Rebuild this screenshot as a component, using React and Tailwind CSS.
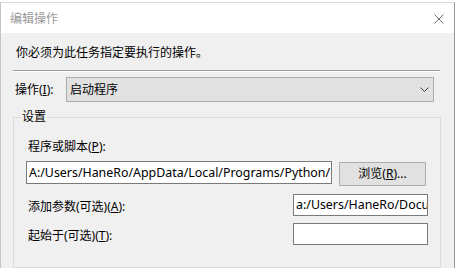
import React from 'react'

const Field = ({ text, className = '' }) => (
    <div className={`h-[22px] bg-white border border-[#7a7a7a] overflow-hidden whitespace-nowrap text-[12.4px] leading-[20px] pl-[2px] ${className}`}>
        {text}
    </div>
)

const App = () => {
    return (
        <div className="w-[456px] h-[268px] bg-white overflow-hidden text-[12px] text-black font-['Noto_Sans','Noto_Sans_CJK_SC',sans-serif]">
            <div className="mt-[2px] w-[455px] h-[266px] border-t border-l border-r border-t-[#dadada] border-l-[#c4c4c4] border-r-[#9a9a9a] flex flex-col">
                {/* title bar */}
                <div className="h-[30px] bg-white flex items-center justify-between pl-[9px] pr-[9px] pt-[1px]">
                    <span className="text-[#9a9a9a] leading-[16px]">编辑操作</span>
                    <svg width="10" height="10" viewBox="0 0 10 10" className="mr-[1px]">
                        <path d="M0.5 0.5 L9.5 9.5 M9.5 0.5 L0.5 9.5" stroke="#707070" strokeWidth="1" fill="none" />
                    </svg>
                </div>

                <div className="flex-1 bg-[#f0f0f0] flex flex-col">
                    <p className="pt-[12px] pl-[15px] leading-[16px]">你必须为此任务指定要执行的操作。</p>

                    <div className="mt-[9px] ml-[12px] w-[427px]">
                        <div className="h-px bg-[#a0a0a0]" />
                        <div className="h-px bg-white" />
                    </div>

                    <div className="mt-[5px] ml-[14px] flex items-center">
                        <span className="w-[51px] leading-[16px]">操作(<u>I</u>):</span>
                        <div className="w-[368px] h-[25px] bg-[#e1e1e1] border border-[#adadad] flex items-center justify-between pl-[3px] pr-[4px]">
                            <span className="leading-[16px]">启动程序</span>
                            <svg width="9" height="5" viewBox="0 0 9 5">
                                <path d="M0.5 0.5 L4.5 4.5 L8.5 0.5" stroke="#404040" strokeWidth="1" fill="none" />
                            </svg>
                        </div>
                    </div>

                    <fieldset className="mt-[7px] ml-[12px] w-[428px] flex-1 border border-[#dcdcdc]">
                        <legend className="ml-[7px] px-[1px] leading-[16px]">设置</legend>
                        <div className="pl-[12px] pr-[12px]">
                            <p className="mt-[14px] ml-[2px] leading-[16px]">程序或脚本(<u>P</u>):</p>
                            <div className="mt-[6px] flex items-start">
                                <Field text="A:/Users/HaneRo/AppData/Local/Programs/Python/" className="w-[306px] !h-[23px] pl-[1px] leading-[21px]" />
                                <button className="ml-[7px] mt-[1px] w-[87px] h-[24px] bg-[#e1e1e1] border border-[#adadad] leading-[16px]">
                                    浏览(<u>R</u>)...
                                </button>
                            </div>
                            <div className="mt-[8px] flex items-center justify-between">
                                <span className="ml-[2px] mt-[3px] leading-[16px]">添加参数(可选)(<u>A</u>):</span>
                                <Field text="a:/Users/HaneRo/Documents" className="w-[135px]" />
                            </div>
                            <div className="mt-[7px] flex items-center justify-between">
                                <span className="ml-[2px] mt-[4px] leading-[16px]">起始于(可选)(<u>T</u>):</span>
                                <Field text="" className="w-[135px]" />
                            </div>
                        </div>
                    </fieldset>
                </div>
            </div>
        </div>
    )
}

export default App
